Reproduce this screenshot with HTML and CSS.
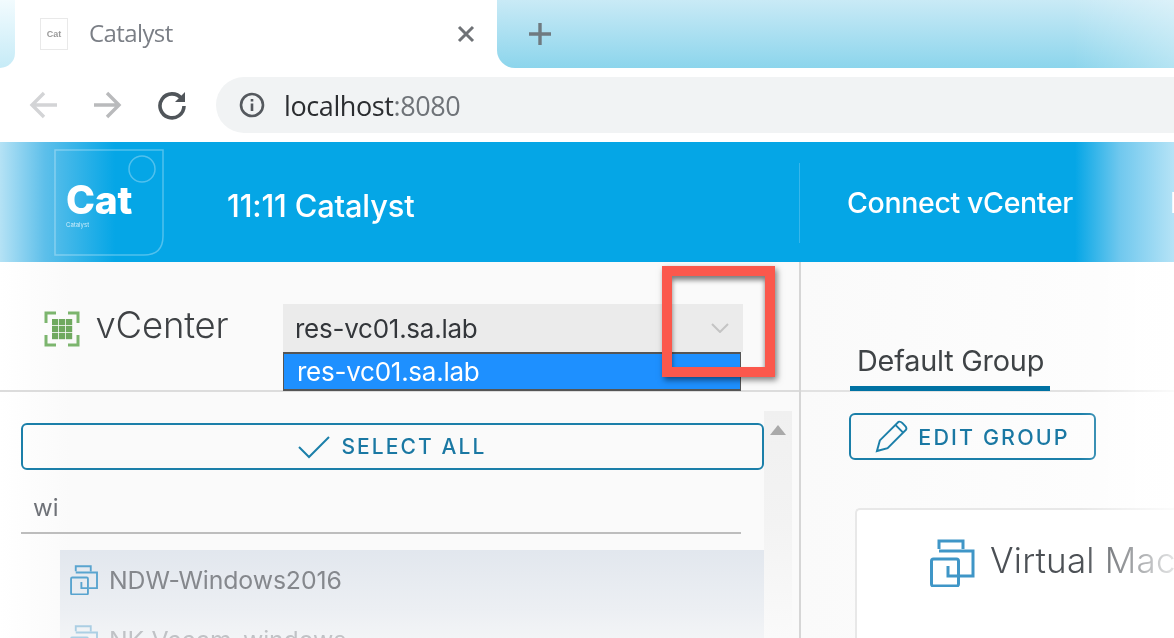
FILE: index.html
```html
<!DOCTYPE html>
<html lang="en">
<head>
<meta charset="utf-8">
<title>Catalyst</title>
<link rel="stylesheet" href="styles.css">
</head>
<body>
<div class="page">
  <div class="tabstrip">
    <div class="strip-left"></div>
    <div class="tab">
      <div class="favicon"><span>Cat</span></div>
      <span class="tab-title">Catalyst</span>
      <svg class="tab-close" viewBox="0 0 18 18"><path d="M2 2L16 16M16 2L2 16"/></svg>
    </div>
    <div class="strip-right">
      <svg class="new-tab" viewBox="0 0 24 24"><path d="M12 1V23M1 12H23"/></svg>
    </div>
  </div>

  <div class="toolbar">
    <svg class="nav-btn back" viewBox="0 0 30 30"><path d="M28 15H4M15 3L3 15L15 27"/></svg>
    <svg class="nav-btn forward" viewBox="0 0 30 30"><path d="M2 15H26M15 3L27 15L15 27"/></svg>
    <svg class="reload" viewBox="0 0 30 30"><path class="reload-arc" d="M24.5 8.5A12 12 0 1 0 27 16"/><path class="reload-head" d="M18 12H28V2Z"/></svg>
    <div class="omnibox">
      <svg class="info" viewBox="0 0 26 26"><circle cx="13" cy="13" r="11"/><path d="M13 11.5V19M13 7V9.5"/></svg>
      <span class="url">localhost<span class="url-port">:8080</span></span>
    </div>
  </div>

  <header class="app-header">
    <div class="logo">
      <svg class="logo-frame" viewBox="0 0 110 107"><path d="M1 1H109V87Q109 106 90 106H1Z"/><circle cx="88" cy="20" r="13"/></svg>
      <span class="logo-word">Cat</span>
      <span class="logo-sub">Catalyst</span>
    </div>
    <div class="app-name">11:11 Catalyst</div>
    <nav class="app-nav">
      <span class="nav-item">Connect vCenter</span>
      <span class="nav-item">Manage</span>
    </nav>
  </header>

  <main class="content">
    <section class="left-pane">
      <div class="vcenter-row">
        <svg class="vcenter-icon" viewBox="0 0 36 36">
          <path class="vc-frame" d="M12 2H2V12M24 2H34V12M2 24V34H12M34 24V34H24"/>
          <rect class="vc-cell" x="8" y="8" width="6.2" height="6.2"/>
          <rect class="vc-cell" x="15" y="8" width="6.2" height="6.2"/>
          <rect class="vc-cell" x="22" y="8" width="6.2" height="6.2"/>
          <rect class="vc-cell" x="8" y="15" width="6.2" height="6.2"/>
          <rect class="vc-cell" x="15" y="15" width="6.2" height="6.2"/>
          <rect class="vc-cell" x="22" y="15" width="6.2" height="6.2"/>
          <rect class="vc-cell" x="8" y="22" width="6.2" height="6.2"/>
          <rect class="vc-cell" x="15" y="22" width="6.2" height="6.2"/>
          <rect class="vc-cell" x="22" y="22" width="6.2" height="6.2"/>
        </svg>
        <span class="vcenter-label">vCenter</span>
        <div class="select-wrap">
          <div class="select-box">
            <span>res-vc01.sa.lab</span>
            <svg class="chevron" viewBox="0 0 18 10"><path d="M1 1L9 9L17 1"/></svg>
          </div>
          <div class="select-option">res-vc01.sa.lab</div>
        </div>
      </div>
      <div class="list-area">
        <div class="list-main">
          <button class="btn btn-wide">
            <svg class="btn-check" viewBox="0 0 32 24"><path d="M1 12L11 22L31 2"/></svg>
            <span>SELECT ALL</span>
          </button>
          <div class="filter"><span>wi</span></div>
          <ul class="vm-list">
            <li class="vm-item">
              <svg class="vm-icon" viewBox="0 0 46 48"><path d="M9 10V2H33V10M9 12H43V37H30M18 27V37H28"/><rect x="1.5" y="20" width="27" height="27" rx="2"/></svg>
              <span>NDW-Windows2016</span>
            </li>
            <li class="vm-item vm-item-faded">
              <svg class="vm-icon" viewBox="0 0 46 48"><path d="M9 10V2H33V10M9 12H43V37H30M18 27V37H28"/><rect x="1.5" y="20" width="27" height="27" rx="2"/></svg>
              <span>NK-Veeam-windows</span>
            </li>
          </ul>
        </div>
        <div class="scrollbar"><span class="scroll-up"></span></div>
      </div>
    </section>

    <section class="right-pane">
      <div class="tabs-row"><span class="group-tab">Default Group</span></div>
      <button class="btn btn-edit">
        <svg class="btn-pencil" viewBox="0 0 34 34"><path d="M2 32L5 21L24 2Q26 1 28 3L31 6Q33 8 32 10L13 29Z"/><path d="M21 5L29 13"/></svg>
        <span>EDIT GROUP</span>
      </button>
      <div class="card">
        <svg class="card-icon" viewBox="0 0 46 48"><path d="M9 10V2H33V10M9 12H43V37H30M18 27V37H28"/><rect x="1.5" y="20" width="27" height="27" rx="2"/></svg>
        <span class="card-title">Virtual Machines</span>
      </div>
    </section>
  </main>

  <div class="annotation"></div>
  <div class="edge-fade"></div>
</div>
</body>
</html>
```
FILE: styles.css
```css
* { box-sizing: border-box; }
html, body { margin: 0; padding: 0; background: #fff; }
.page {
  position: relative;
  width: 1174px;
  height: 638px;
  overflow: hidden;
  font-family: Inter, "Noto Sans", "Liberation Sans", sans-serif;
  filter: blur(0.6px);
}

/* browser tab strip */
.tabstrip { display: flex; height: 68px; background: #fff; }
.strip-left {
  width: 15px;
  background: linear-gradient(#f2fbfe, #c6ebf7);
  border-bottom-right-radius: 15px;
}
.tab {
  width: 482px;
  display: flex;
  align-items: center;
  background: #fff;
  border-radius: 14px 14px 0 0;
  padding: 0 22px 0 25px;
}
.favicon {
  width: 28px;
  height: 32px;
  border: 1px solid #e9e9e9;
  display: flex;
  align-items: center;
  justify-content: center;
  font: 700 9px "Liberation Sans", sans-serif;
  color: #9a9a9a;
}
.tab-title {
  margin: -3px 0 0 21px;
  flex: 1;
  font: 24px "Open Sans", "Liberation Sans", sans-serif;
  letter-spacing: -0.6px;
  color: #7b7f86;
}
.tab-close { width: 18px; height: 18px; fill: none; stroke: #6f7276; stroke-width: 3; }
.strip-right {
  flex: 1;
  display: flex;
  align-items: center;
  padding-left: 31px;
  background:
    linear-gradient(90deg, transparent 85%, rgba(255,255,255,.35)),
    linear-gradient(#c9eaf6, #8cd5ec);
  border-bottom-left-radius: 18px;
}
.new-tab { width: 24px; height: 24px; fill: none; stroke: #6f7a80; stroke-width: 3.4; }

/* browser toolbar */
.toolbar { display: flex; align-items: center; height: 74px; background: #fff; padding: 0 0 0 29px; }
.nav-btn { width: 30px; height: 30px; fill: none; stroke-width: 3.4; }
.back { stroke: #d3d4d6; }
.forward { stroke: #b9babc; margin-left: 33px; }
.reload { width: 30px; height: 30px; margin-left: 35px; fill: none; }
.reload-arc { stroke: #50555a; stroke-width: 3.6; }
.reload-head { fill: #50555a; }
.omnibox {
  flex: 1;
  height: 56px;
  margin-left: 29px;
  display: flex;
  align-items: center;
  padding-left: 23px;
  background: #f1f3f4;
  border-radius: 28px 0 0 28px;
}
.info { width: 26px; height: 26px; fill: none; stroke: #55595e; stroke-width: 2.6; }
.url { margin-left: 19px; font: 27px "Open Sans", "Liberation Sans", sans-serif; letter-spacing: -0.4px; color: #2b2d30; }
.url-port { color: #6f7378; }

/* application header */
.app-header {
  display: flex;
  align-items: stretch;
  height: 120px;
  padding-left: 54px;
  color: #fff;
  white-space: nowrap;
  background: linear-gradient(90deg, #b5e2f5 0, #5dbfea 45px, #05a6e6 115px, #05a6e6 1075px, #70c8ee 1120px, #b5e3f6 1174px);
}
.logo { flex: none; position: relative; width: 110px; height: 107px; margin-top: 7px; display: flex; flex-direction: column; padding: 29px 0 0 12px; }
.logo-frame { position: absolute; left: 0; top: 0; width: 110px; height: 107px; fill: none; stroke: rgba(255,255,255,.3); stroke-width: 1.5; }
.logo-word { font-size: 39px; line-height: 44px; font-weight: 800; letter-spacing: -0.2px; }
.logo-sub { font-size: 6px; line-height: 8px; margin-top: -1px; opacity: .75; }
.app-name { flex: none; width: 635px; padding-left: 63px; align-self: center; margin-top: 7px; font-size: 30.8px; font-weight: 500; letter-spacing: -0.15px; }
.app-nav {
  flex: none;
  display: flex;
  gap: 97px;
  align-items: center;
  padding-left: 47px;
  margin-top: 21px;
  height: 80px;
  border-left: 1px solid rgba(255,255,255,.2);
}
.nav-item { font-size: 28.5px; font-weight: 500; letter-spacing: -0.35px; margin-top: -1px; }

/* content */
.content {
  display: flex;
  height: 376px;
  background: #fafafa;
}
.left-pane { flex: none; width: 801px; border-right: 2px solid #d6d6d6; display: flex; flex-direction: column; background: linear-gradient(90deg, #fff, #fafafa 70px); }
.vcenter-row {
  display: flex;
  height: 130px;
  padding: 42px 0 0 44px;
  border-bottom: 2px solid #dcdcdc;
}
.vcenter-icon { width: 36px; height: 36px; margin-top: 7px; fill: none; }
.vc-frame { stroke: #7cb56e; stroke-width: 3; }
.vc-cell { fill: #6fa95f; }
.vcenter-label { margin: -1px 0 0 15.5px; width: 187.5px; font-size: 36.5px; line-height: 44px; font-weight: 300; letter-spacing: -0.2px; color: #3f4245; }
.select-wrap { width: 460px; }
.select-box {
  display: flex;
  justify-content: space-between;
  align-items: center;
  height: 48px;
  padding: 0 14px 0 12px;
  background: #ebebeb;
  font-size: 26px;
  letter-spacing: -0.25px;
  color: #33363a;
}
.chevron { width: 18px; height: 10px; fill: none; stroke: #c4c4c4; stroke-width: 2; }
.select-option {
  width: 458px;
  height: 39px;
  padding-left: 13px;
  line-height: 35px;
  background: #1e90ff;
  border: 1px solid #555;
  border-bottom-width: 2px;
  border-top-width: 2px;
  font-size: 26px;
  letter-spacing: -0.25px;
  color: #fff;
}
.list-area { flex: 1; display: flex; padding-top: 19px; min-height: 0; }
.list-main { width: 764px; padding: 12px 0 0 21px; }
.btn {
  display: flex;
  align-items: center;
  justify-content: center;
  background: transparent;
  border: 2px solid #1b7fa9;
  border-radius: 6px;
  font-family: inherit;
  font-weight: 500;
  color: #1a78a3;
  letter-spacing: 2.1px;
}
.btn-wide { width: 743px; height: 47px; font-size: 21px; gap: 11px; }
.btn-check { width: 32px; height: 24px; fill: none; stroke: #1b7fa9; stroke-width: 2; }
.filter {
  width: 720px;
  height: 64px;
  padding: 24px 0 0 12px;
  border-bottom: 2px solid #bdbdbd;
  font-size: 24px;
  line-height: 28px;
  color: #6f7278;
}
.vm-list {
  list-style: none;
  margin: 16px 0 0 39px;
  padding: 0;
  height: 120px;
  background: linear-gradient(#e2e7ee, #eceff3 50%, #fafafa);
}
.vm-item {
  display: flex;
  align-items: center;
  height: 60px;
  padding: 0 0 0 10px;
  font-size: 24.8px;
  letter-spacing: -0.1px;
  color: #85888d;
}
.vm-item-faded { opacity: .45; }
.vm-icon { width: 29px; height: 30px; margin-right: 10px; fill: none; stroke: #59a4cf; stroke-width: 3; }
.scrollbar { width: 28px; background: linear-gradient(#f0f0f0, #f3f3f3 50%, #fafafa); display: flex; justify-content: center; padding-top: 14px; }
.scroll-up { width: 0; height: 0; border-left: 8px solid transparent; border-right: 8px solid transparent; border-bottom: 10px solid #a9a9a9; }

.right-pane { flex: 1; min-width: 0; display: flex; flex-direction: column; padding-left: 48px; background: linear-gradient(90deg, #fafafa, #fdfdfd 80%, #fff); }
.tabs-row { flex: none; height: 130px; margin-left: -48px; padding-left: 49px; border-bottom: 2px solid #e2e2e2; display: flex; align-items: flex-end; }
.group-tab {
  width: 200px;
  height: 46px;
  padding-left: 7px;
  margin-bottom: -1px;
  border-bottom: 5px solid #0072a3;
  font-size: 28.8px;
  line-height: 31px;
  letter-spacing: -0.2px;
  color: #3f4346;
  white-space: nowrap;
}
.btn-edit { flex: none; width: 247px; height: 47px; margin-top: 21px; font-size: 21.5px; gap: 10px; }
.btn-pencil { width: 33px; height: 33px; fill: none; stroke: #1b7fa9; stroke-width: 2; }
.card {
  flex: 1;
  margin: 48px 0 0 6px;
  display: flex;
  align-items: flex-start;
  padding: 29px 0 0 73px;
  background: #fff;
  border: 2px solid #e8e8e8;
  border-right: 0;
  border-bottom: 0;
  border-radius: 5px 0 0 0;
  white-space: nowrap;
}
.card-icon { flex: none; width: 46px; height: 48px; fill: none; stroke: #3f96c7; stroke-width: 3; }
.card-title { margin-left: 14px; margin-top: 1px; font-size: 35px; line-height: 40px; font-weight: 300; letter-spacing: .2px; color: #4c5055; }

/* overlays */
.annotation {
  position: absolute;
  left: 662px;
  top: 266px;
  width: 113px;
  height: 111px;
  border: 10px solid #fb584c;
  box-shadow: 2px 3px 6px rgba(0,0,0,.5), inset 0 4px 5px rgba(0,0,0,.5);
}
.edge-fade {
  position: absolute;
  left: 1080px;
  top: 262px;
  width: 94px;
  height: 376px;
  background: linear-gradient(90deg, rgba(255,255,255,0), rgba(255,255,255,.85));
  pointer-events: none;
}
```
